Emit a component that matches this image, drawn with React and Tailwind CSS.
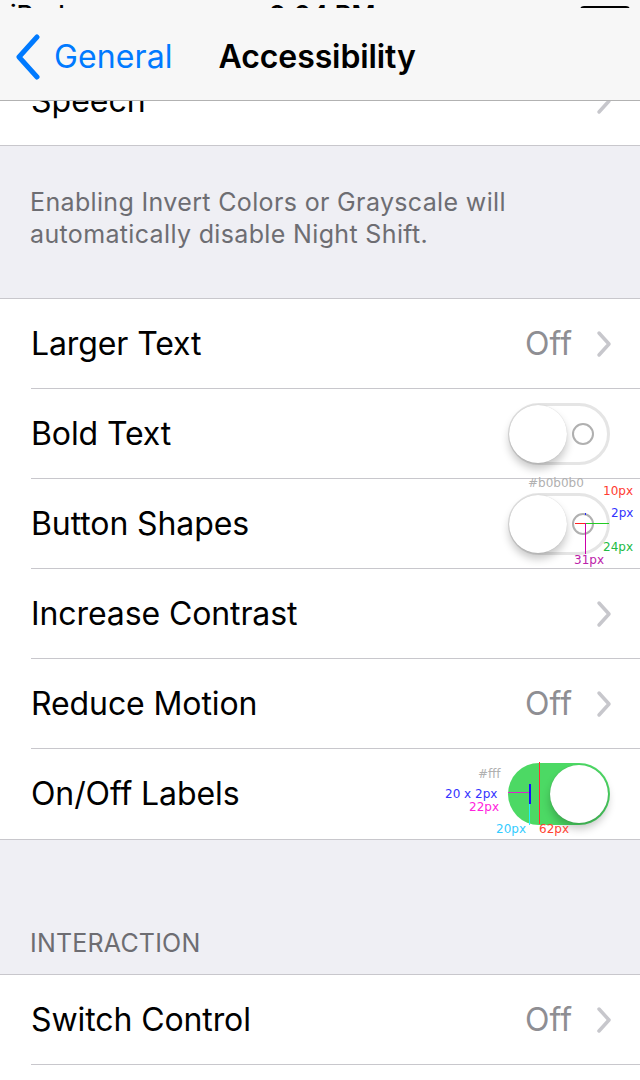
const font = { fontFamily: 'Inter, "Noto Sans", sans-serif' };
const noteFont = { fontFamily: '"DejaVu Sans", sans-serif' };

function Chevron() {
  return (
    <svg width="16" height="28" viewBox="0 0 16 28" className="shrink-0">
      <path d="M3 3 L13 14 L3 25" fill="none" stroke="#c7c7cc" strokeWidth="3.5" strokeLinecap="round" strokeLinejoin="round" />
    </svg>
  );
}

function BackChevron() {
  return (
    <svg width="26" height="46" viewBox="0 0 26 46" className="shrink-0">
      <path d="M22 3 L4 23 L22 43" fill="none" stroke="#007aff" strokeWidth="5" strokeLinecap="round" strokeLinejoin="round" />
    </svg>
  );
}

function Row({ label, value, chevron, last, children }) {
  return (
    <div className="flex h-[90px] items-center pl-[31px]">
      <div className={`flex h-full flex-1 items-center pr-[28px] ${last ? '' : 'border-b border-[#c8c7cc]'}`}>
        <span className="flex-1 text-[32px] tracking-[-0.1px] text-black">{label}</span>
        {value && <span className="mr-[24px] text-[32px] text-[#8e8e93]">{value}</span>}
        {chevron && <Chevron />}
        {children}
      </div>
    </div>
  );
}

// switch, 102x62; off state shows the hollow circle label, on state the bar
function Toggle({ on, notes }) {
  return (
    <div className="relative mr-[2px]">
      <div
        className={`relative h-[62px] w-[102px] rounded-full ${on ? 'bg-[#4cd964]' : 'border-[3px] border-[#e5e5e5] bg-white'}`}
      >
        {on ? (
          <div className="absolute left-[21px] top-[21px] h-[20px] w-[2px] bg-white" />
        ) : (
          <div className="absolute right-[13px] top-1/2 h-[22px] w-[22px] -translate-y-1/2 rounded-full border-2 border-[#b0b0b0]" />
        )}
        <div
          className={`absolute h-[58px] w-[58px] rounded-full bg-white shadow-[0_6px_8px_rgba(0,0,0,0.22),0_0_1px_rgba(0,0,0,0.2)] ${on ? 'right-[2px] top-[2px]' : '-left-[2px] -top-[1px]'}`}
        />
      </div>
      {notes}
    </div>
  );
}

// measurement marks drawn over the off switch
function OffNotes() {
  return (
    <div className="pointer-events-none absolute inset-0 text-[12px] leading-none" style={noteFont}>
      <span className="absolute -top-[16px] left-[20px] text-[#b0b0b0]">#b0b0b0</span>
      <span className="absolute -top-[8px] left-[95px] text-[#ff3b30]">10px</span>
      <span className="absolute top-[14px] left-[103px] text-[#3333ff]">2px</span>
      <span className="absolute top-[48px] left-[95px] text-[#22bb44]">24px</span>
      <span className="absolute top-[61px] left-[66px] text-[#bb22aa]">31px</span>
      <div className="absolute left-[67px] top-[30px] h-[1px] w-[10px] bg-[#ff2020]" />
      <div className="absolute left-[77px] top-[30px] h-[1px] w-[24px] bg-[#22cc22]" />
      <div className="absolute left-[77px] top-[30px] h-[31px] w-[1px] bg-[#cc00aa]" />
      <div className="absolute left-[77px] top-[20px] h-[2px] w-[1px] bg-[#2020ff]" />
    </div>
  );
}

// measurement marks drawn over the on switch
function OnNotes() {
  return (
    <div className="pointer-events-none absolute inset-0 text-[12px] leading-none" style={noteFont}>
      <span className="absolute top-[5px] -left-[30px] text-[#b0b0b0]">#fff</span>
      <span className="absolute top-[25px] -left-[63px] whitespace-nowrap text-[#3333ff]">20 x 2px</span>
      <span className="absolute top-[38px] -left-[39px] text-[#ff22dd]">22px</span>
      <span className="absolute top-[60px] -left-[12px] text-[#33ccff]">20px</span>
      <span className="absolute top-[60px] left-[31px] text-[#ff4433]">62px</span>
      <div className="absolute left-[31px] -top-[1px] h-[62px] w-[1px] bg-[#ff3030]" />
      <div className="absolute left-0 top-[29px] h-[1px] w-[21px] bg-[#dd22cc]" />
      <div className="absolute left-[21px] top-[21px] h-[20px] w-[2px] bg-[#1010ff]" />
      <div className="absolute left-[21px] top-[41px] h-[21px] w-[1px] bg-[#22eeff]" />
    </div>
  );
}

export default function App() {
  return (
    <div className="relative h-[1080px] w-[640px] overflow-hidden bg-white" style={font}>
      {/* top bar */}
      <div className="relative z-10 h-[101px] border-b border-[#b2b2b2] bg-[#f7f7f7]">
        <div className="flex h-[8px] items-end justify-between overflow-hidden px-[10px] text-[26px] leading-none">
          <span className="-mb-[20px] font-medium">iPod</span>
          <span className="-mb-[20px] font-semibold">2:04 PM</span>
          <span className="-mb-[20px] inline-block h-[22px] w-[50px] rounded-[4px] border-2 border-black" />
        </div>
        <div className="flex h-[92px] items-center pt-[6px]">
          <div className="flex items-center gap-[13px] pl-[15px] text-[#007aff]">
            <BackChevron />
            <span className="text-[32px] tracking-[0.1px]">General</span>
          </div>
          <span className="ml-[46px] text-[32px] font-semibold tracking-[-0.1px] text-black">Accessibility</span>
        </div>
      </div>

      {/* Speech row, partly under the bar */}
      <div className="-mt-[45px] flex h-[90px] items-center border-b border-[#c8c7cc] pl-[31px] pr-[28px]">
        <span className="flex-1 text-[32px] text-black">Speech</span>
        <Chevron />
      </div>

      <div className="h-[153px] border-b border-[#c8c7cc] bg-[#efeff4] pl-[30px] pr-[20px] pt-[40px] text-[25px] leading-[32px] tracking-[0.35px] text-[#6d6d72]">
        Enabling Invert Colors or Grayscale will automatically disable Night Shift.
      </div>

      <div className="border-b border-[#c8c7cc]">
        <Row label="Larger Text" value="Off" chevron />
        <Row label="Bold Text">
          <Toggle />
        </Row>
        <Row label="Button Shapes">
          <Toggle notes={<OffNotes />} />
        </Row>
        <Row label="Increase Contrast" chevron />
        <Row label="Reduce Motion" value="Off" chevron />
        <Row label="On/Off Labels" last>
          <Toggle on notes={<OnNotes />} />
        </Row>
      </div>

      <div className="flex h-[135px] items-end border-b border-[#c8c7cc] bg-[#efeff4] px-[30px] pb-[12px] text-[25px] uppercase tracking-[0.2px] text-[#6d6d72]">
        Interaction
      </div>

      <Row label="Switch Control" value="Off" chevron />
    </div>
  );
}
